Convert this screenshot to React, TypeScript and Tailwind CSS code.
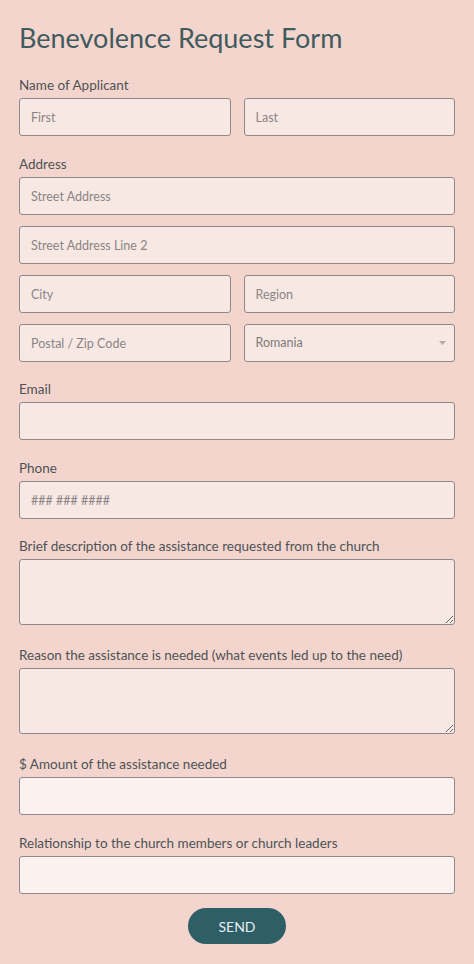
import React from "react";

const font = { fontFamily: "Lato, 'Open Sans', sans-serif" };

const boxCls =
  "h-[38px] w-full rounded-[3px] border border-[#8f8a89] px-[11px] text-[12.5px] placeholder:text-[#8a8584] outline-none";
const inputCls = boxCls + " bg-[#f8e8e4] text-[#555]";

function Label({ children }: { children: React.ReactNode }) {
  return <div className="mb-[4px] text-[13.5px] leading-[18px] text-[#4d5355]">{children}</div>;
}

function Field({ placeholder }: { placeholder?: string }) {
  return <input className={inputCls} placeholder={placeholder} />;
}

function Area() {
  return (
    <textarea className="block h-[66px] w-full resize-y rounded-[3px] border border-[#8f8a89] bg-[#f8e8e4] px-[11px] py-2 text-[13px] outline-none" />
  );
}

export default function App() {
  return (
    <div className="min-h-[964px] w-[474px] bg-[#f4d5cd] px-[19px] pt-[20px]" style={font}>
      <h1 className="mb-[20px] text-[27px] leading-[36px] text-[#3f5b5e]">Benevolence Request Form</h1>

      <div className="mb-[19px]">
        <Label>Name of Applicant</Label>
        <div className="grid grid-cols-2 gap-[13px]">
          <Field placeholder="First" />
          <Field placeholder="Last" />
        </div>
      </div>

      <div className="mb-[18px]">
        <Label>Address</Label>
        <div className="flex flex-col gap-[11px]">
          <Field placeholder="Street Address" />
          <Field placeholder="Street Address Line 2" />
          <div className="grid grid-cols-2 gap-[13px]">
            <Field placeholder="City" />
            <Field placeholder="Region" />
          </div>
          <div className="grid grid-cols-2 gap-[13px]">
            <Field placeholder="Postal / Zip Code" />
            <div className="relative">
              <select className={boxCls + " appearance-none bg-[#f8e8e4] text-[#7d7877]"} defaultValue="Romania">
                <option>Romania</option>
              </select>
              <svg className="pointer-events-none absolute right-[9px] top-[17px]" width="7" height="4" viewBox="0 0 7 4">
                <path d="M0 0h7L3.5 4z" fill="#b5aaa7" />
              </svg>
            </div>
          </div>
        </div>
      </div>

      <div className="mb-[19px]">
        <Label>Email</Label>
        <Field />
      </div>

      <div className="mb-[18px]">
        <Label>Phone</Label>
        <Field placeholder="### ### ####" />
      </div>

      <div className="mb-[21px]">
        <Label>Brief description of the assistance requested from the church</Label>
        <Area />
      </div>

      <div className="mb-[21px]">
        <Label>Reason the assistance is needed (what events led up to the need)</Label>
        <Area />
      </div>

      <div className="mb-[19px]">
        <Label>$ Amount of the assistance needed</Label>
        <input className={boxCls + " bg-[#fbf1ee] text-[#555]"} />
      </div>

      <div className="mb-[14px]">
        <Label>Relationship to the church members or church leaders</Label>
        <input className={boxCls + " bg-[#fbf1ee] text-[#555]"} />
      </div>

      <div className="flex justify-center">
        <button className="h-[36px] w-[98px] rounded-full bg-[#2f5f66] text-[14px] text-[#e6eef0]">SEND</button>
      </div>
    </div>
  );
}
